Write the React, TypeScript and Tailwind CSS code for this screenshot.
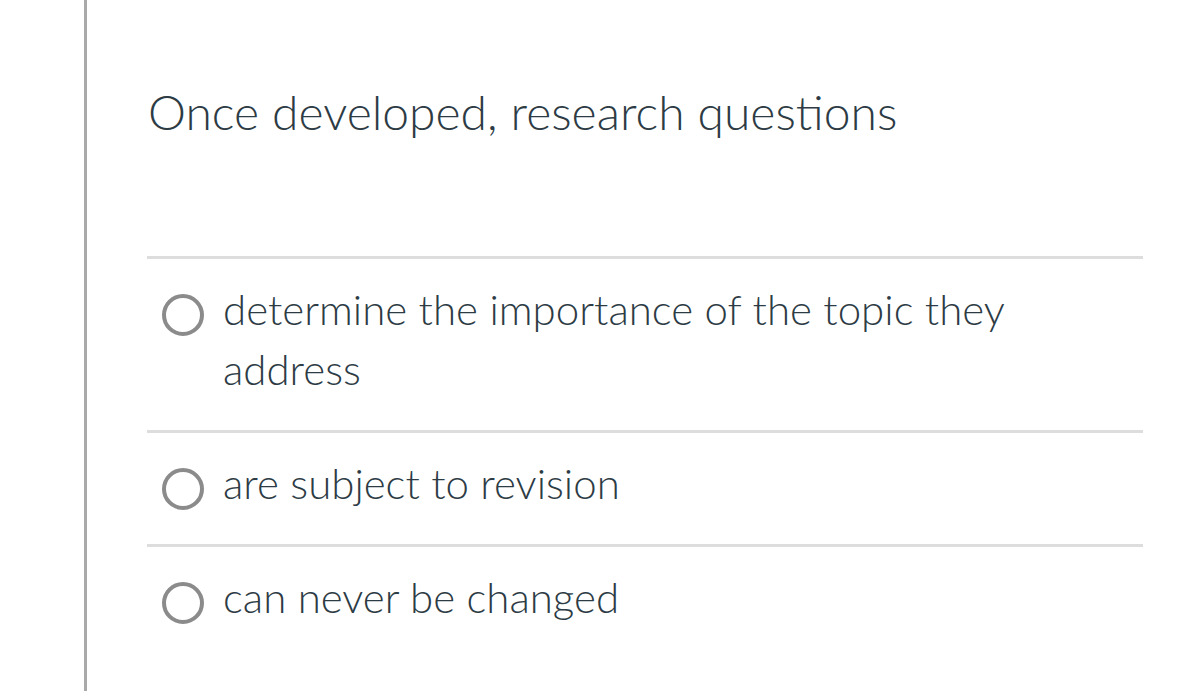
import React from "react";

const options = [
  "determine the importance of the topic they address",
  "are subject to revision",
  "can never be changed",
];

export default function App() {
  return (
    <div className="w-[1195px] h-[691px] bg-white overflow-hidden flex" style={{ fontFamily: "Lato, 'Open Sans', sans-serif" }}>
      <div className="w-[84px] shrink-0" />
      <div className="w-[3px] shrink-0 bg-[#a9a9a9]" />
      <div className="w-[60px] shrink-0" />
      <div className="w-[996px] shrink-0 flex flex-col">
        <div className="pt-[82px] h-[256px] text-[48px] leading-[60px] font-light text-[#2d3b45] pl-[1px]">
          Once developed, research questions
        </div>
        {options.map((o) => (
          <div key={o} className="border-t-[3px] border-[#dddddd] pt-[20px] pb-[31px] flex items-start">
            <div className="ml-[15px] mr-[19px] mt-[15px] w-[42px] h-[42px] shrink-0 rounded-full border-[4px] border-[#8b8b8b]" />
            <div className="text-[42px] leading-[60px] font-light text-[#2d3b45] w-[820px]">{o}</div>
          </div>
        ))}
      </div>
    </div>
  );
}
